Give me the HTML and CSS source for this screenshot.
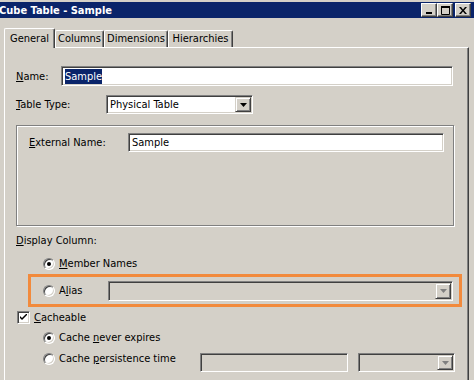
FILE: index.html
```html
<!DOCTYPE html>
<html>
	<head>
		<link rel="stylesheet" href="styles.css">
	</head>
	<body>
		<div class="window">
			<div class="titlebar">
				<span class="title">Cube Table - Sample</span>
				<div class="caption">
					<span class="cbtn">
						<svg width="8" height="8" viewBox="0 0 8 8"><rect x="1" y="6" width="6" height="2" fill="#000"/></svg>
					</span>
					<span class="cbtn">
						<svg width="9" height="9" viewBox="0 0 9 9"><path d="M0.5 1.5h8v7h-8z" fill="none" stroke="#000"/><rect x="0" y="0" width="9" height="2" fill="#000"/></svg>
					</span>
					<span class="cbtn close">
						<svg width="8" height="7" viewBox="0 0 8 7"><path d="M0 0h2l2 2.5 2-2.5h2l-3 3.5 3 3.5h-2l-2-2.5-2 2.5h-2l3-3.5z" fill="#000"/></svg>
					</span>
				</div>
			</div>

			<div class="tabs">
				<span class="tab active">General</span>
				<span class="tab tab-columns">Columns</span>
				<span class="tab tab-dims">Dimensions</span>
				<span class="tab tab-hier">Hierarchies</span>
			</div>

			<div class="panel">
				<div class="row name-row">
					<span class="lbl lbl-name"><u>N</u>ame:</span>
					<div class="field name-field"><span class="field-text"><span class="sel">Sample</span></span></div>
				</div>

				<div class="row type-row">
					<span class="lbl lbl-type"><u>T</u>able Type:</span>
					<div class="field type-field">
						<span class="field-text">Physical Table</span>
						<span class="drop-btn"><svg width="7" height="4" viewBox="0 0 7 4"><path d="M0 0h7l-3.5 4z" fill="#000"/></svg></span>
					</div>
				</div>

				<div class="groupbox">
					<div class="row ext-row">
						<span class="lbl lbl-ext"><u>E</u>xternal Name:</span>
						<div class="field ext-field"><span class="field-text">Sample</span></div>
					</div>
				</div>

				<div class="section-lbl"><u>D</u>isplay Column:</div>

				<div class="option member-row">
					<span class="radio checked"></span>
					<span class="opt-text"><u>M</u>ember Names</span>
				</div>

				<div class="highlight">
					<div class="option alias-row">
						<span class="radio"></span>
						<span class="opt-text alias-text">A<u>l</u>ias</span>
						<div class="field disabled alias-field">
							<span class="drop-btn"><svg width="7" height="4" viewBox="0 0 7 4"><path d="M0 0h7l-3.5 4z" fill="#808080"/></svg></span>
						</div>
					</div>
				</div>

				<div class="option cache-row">
					<span class="checkbox">
						<svg width="7" height="7" viewBox="0 0 7 7"><path d="M0 2l2 2 5-5v2l-5 5-2-2z" fill="#000"/></svg>
					</span>
					<span class="opt-text"><u>C</u>acheable</span>
				</div>

				<div class="option never-row">
					<span class="radio checked"></span>
					<span class="opt-text">Cache <u>n</u>ever expires</span>
				</div>

				<div class="option persist-row">
					<span class="radio"></span>
					<span class="opt-text persist-text">Cache <u>p</u>ersistence time</span>
					<div class="field disabled persist-field"></div>
					<div class="field disabled unit-field">
						<span class="drop-btn"><svg width="7" height="4" viewBox="0 0 7 4"><path d="M0 0h7l-3.5 4z" fill="#808080"/></svg></span>
					</div>
				</div>
			</div>
		</div>
	</body>
</html>
```

FILE: styles.css
```css
body {
	margin: 0;
	background-color: #d4d0c8;
	font-family: "DejaVu Sans Condensed", "DejaVu Sans", sans-serif;
	font-stretch: condensed;
	font-size: 11px;
	color: #000;
	overflow: hidden;
}

u {
	text-decoration-thickness: 1px;
	text-underline-offset: 1px;
}

.window {
	padding-top: 2px;
	height: 378px;
}

/* title bar */
.titlebar {
	display: flex;
	align-items: center;
	height: 16px;
	background-color: #0a246a;
	padding-right: 3px;
}

.title {
	margin-left: -1px;
	color: #fff;
	font-weight: bold;
	font-size: 11px;
}

.caption {
	display: flex;
	margin-left: auto;
}

.cbtn {
	box-sizing: border-box;
	display: flex;
	align-items: center;
	justify-content: center;
	width: 16px;
	height: 14px;
	background: #d4d0c8;
	border: 1px solid;
	border-color: #fff #404040 #404040 #fff;
	box-shadow: inset -1px -1px 0 #808080;
}

.cbtn.close {
	margin-left: 2px;
}

/* tabs */
.tabs {
	display: flex;
	align-items: flex-end;
	margin-top: 10px;
	margin-left: 4px;
	height: 19px;
	position: relative;
	z-index: 1;
}

.tab {
	box-sizing: border-box;
	height: 17px;
	line-height: 15px;
	text-align: center;
	white-space: nowrap;
	background: #d4d0c8;
	border-top: 1px solid #fff;
	border-left: 1px solid #fff;
	border-right: 1px solid #404040;
	box-shadow: inset -1px 0 0 #808080;
	border-radius: 2px 2px 0 0;
}

.tab.active {
	width: 51px;
	height: 20px;
	margin-bottom: -1px;
	line-height: 19px;
}

.tab-columns {
	width: 49px;
}

.tab-dims {
	width: 64px;
}

.tab-hier {
	width: 65px;
}

/* panel */
.panel {
	box-sizing: border-box;
	width: 465px;
	height: 340px;
	margin-left: 4px;
	padding: 18px 0 0 11px;
	border-top: 1px solid #fff;
	border-left: 1px solid #fff;
	border-right: 1px solid #404040;
	box-shadow: inset -1px 0 0 #808080;
}

.row {
	display: flex;
	align-items: center;
}

.lbl {
	flex: none;
}

.name-row {
	height: 20px;
}

.lbl-name {
	width: 45px;
}

.type-row {
	height: 19px;
	margin-top: 9px;
}

.lbl-type {
	width: 90px;
}

/* sunken fields */
.field {
	box-sizing: border-box;
	display: flex;
	align-items: center;
	padding: 1px;
	background: #fff;
	border: 1px solid;
	border-color: #808080 #fff #fff #808080;
	box-shadow: inset 1px 1px 0 #404040, inset -1px -1px 0 #d4d0c8;
}

.field.disabled {
	background: #d4d0c8;
}

.field-text {
	padding-left: 2px;
	white-space: nowrap;
}

.sel {
	background: #0a246a;
	color: #fff;
	padding: 1px 0;
}

.drop-btn {
	box-sizing: border-box;
	display: flex;
	align-items: center;
	justify-content: center;
	width: 16px;
	align-self: stretch;
	margin-left: auto;
	background: #d4d0c8;
	border: 1px solid;
	border-color: #d4d0c8 #404040 #404040 #d4d0c8;
	box-shadow: inset 1px 1px 0 #fff, inset -1px -1px 0 #808080;
}

.name-field {
	width: 392px;
	height: 20px;
}

.type-field {
	width: 147px;
	height: 19px;
}

/* group box */
.groupbox {
	box-sizing: border-box;
	width: 438px;
	height: 101px;
	margin-top: 11px;
	padding: 7px 0 0 12px;
	border: 1px solid #808080;
	box-shadow: 1px 1px 0 #fff, inset 1px 1px 0 #fff;
}

.ext-row {
	height: 19px;
}

.lbl-ext {
	width: 99px;
}

.ext-field {
	width: 316px;
	height: 19px;
}

.section-lbl {
	margin-top: 8px;
	line-height: 14px;
}

/* options */
.option {
	display: flex;
	align-items: center;
	line-height: 14px;
}

.opt-text {
	margin-left: 4px;
	white-space: nowrap;
}

.radio {
	box-sizing: border-box;
	position: relative;
	flex: none;
	width: 12px;
	height: 12px;
	border-radius: 50%;
	background: #fff;
	border: 1px solid;
	border-color: #808080 #fff #fff #808080;
	box-shadow: inset 1px 1px 0 #404040, inset -1px -1px 0 #d4d0c8;
}

.radio.checked::after {
	content: "";
	position: absolute;
	left: 3px;
	top: 3px;
	width: 4px;
	height: 4px;
	border-radius: 50%;
	background: #000;
}

.member-row {
	height: 14px;
	margin-top: 9px;
	margin-left: 27px;
}

.highlight {
	box-sizing: border-box;
	width: 434px;
	height: 33px;
	margin-top: 3px;
	margin-left: 12px;
	padding: 4px 0 0 12px;
	border: 3px solid #f28a3c;
}

.alias-row {
	height: 20px;
}

.alias-text {
	width: 49px;
}

.alias-field {
	width: 345px;
	height: 20px;
}

.checkbox {
	box-sizing: border-box;
	display: flex;
	align-items: center;
	justify-content: center;
	flex: none;
	width: 13px;
	height: 13px;
	background: #fff;
	border: 1px solid;
	border-color: #808080 #fff #fff #808080;
	box-shadow: inset 1px 1px 0 #404040, inset -1px -1px 0 #d4d0c8;
}

.cache-row {
	height: 13px;
	margin-top: 4px;
	margin-left: 1px;
}

.never-row {
	height: 14px;
	margin-top: 7px;
	margin-left: 27px;
}

.persist-row {
	align-items: flex-start;
	margin-top: 7px;
	margin-left: 27px;
}

.persist-row .radio {
	margin-top: 1px;
}

.persist-text {
	width: 141px;
}

.persist-field {
	width: 148px;
	height: 19px;
	margin-top: 1px;
}

.unit-field {
	width: 97px;
	height: 19px;
	margin-top: 1px;
	margin-left: 10px;
}
```
